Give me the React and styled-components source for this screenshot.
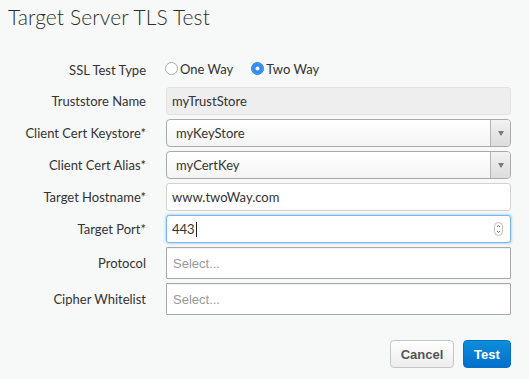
import React from "react";
import styled, { createGlobalStyle } from "styled-components";

const GlobalStyle = createGlobalStyle`
  body {
    margin: 0;
    background: #f7f8f8;
    font-family: Lato, "Open Sans", sans-serif;
    color: #333;
  }
`;

const Page = styled.div`
  width: 529px;
  height: 379px;
  box-sizing: border-box;
  padding: 5px 18px 0 8px;
`;

const Title = styled.h1`
  margin: 0 0 28px;
  font-size: 21px;
  line-height: 24px;
  font-weight: 300;
  color: #2e2e2e;
  letter-spacing: 0.1px;
`;

const Form = styled.div`
  display: grid;
  grid-template-columns: 138px 345px;
  column-gap: 20px;
  row-gap: 4px;
  align-items: center;
`;

const Label = styled.label`
  text-align: right;
  font-size: 13px;
  color: #333;
  white-space: nowrap;
`;

const RadioRow = styled.div`
  display: flex;
  align-items: center;
  height: 24px;
  margin-bottom: 2px;
  font-size: 13px;
`;

const RadioOption = styled.span`
  display: flex;
  align-items: center;
  margin-right: ${(p) => p.$gap || 0}px;
  margin-left: -1px;
`;

const RadioDot = styled.span`
  width: 13px;
  height: 13px;
  box-sizing: border-box;
  border-radius: 50%;
  margin-right: 2px;
  margin-top: -2px;
  ${(p) =>
    p.$checked
      ? `background: #2f8ef0; border: 1px solid #2a82de; box-shadow: inset 0 0 0 3.5px #2f8ef0, inset 0 0 0 7px #fff;`
      : `background: #fff; border: 1px solid #a8a8a8;`}
`;

const TextBox = styled.div`
  height: 28px;
  box-sizing: border-box;
  display: flex;
  align-items: center;
  padding: 0 6px 0 5px;
  font-size: 13px;
  border-radius: 3px;
  background: ${(p) => (p.$disabled ? "#eeeeee" : "#fff")};
  border: 1px solid ${(p) => (p.$disabled ? "#e2e2e2" : p.$focus ? "#76b6f4" : "#d2d2d2")};
  box-shadow: ${(p) => (p.$focus ? "0 0 2px 1px rgba(118,182,244,0.45)" : "none")};
`;

const Caret = styled.span`
  width: 1px;
  height: 15px;
  background: #222;
  margin-left: 1px;
`;

const Spinner = styled.svg`
  margin-left: auto;
  margin-right: 1px;
`;

const SelectBox = styled.div`
  height: 28px;
  box-sizing: border-box;
  display: flex;
  border: 1px solid #a9a9a9;
  border-radius: 4px;
  background: linear-gradient(#ffffff, #f4f4f4);
  font-size: 13px;
  overflow: hidden;
`;

const SelectValue = styled.span`
  flex: 1;
  display: flex;
  align-items: center;
  padding-left: 9px;
`;

const ArrowBox = styled.span`
  width: 19px;
  border-left: 1px solid #b5b5b5;
  background: linear-gradient(#f2f2f2, #dcdcdc);
  display: flex;
  align-items: center;
  justify-content: center;
`;

const Arrow = styled.span`
  width: 0;
  height: 0;
  border-left: 3px solid transparent;
  border-right: 3px solid transparent;
  border-top: 5px solid #7a7a7a;
  margin-top: 1px;
`;

const MultiSelect = styled.div`
  height: 32px;
  box-sizing: border-box;
  display: flex;
  align-items: center;
  padding: 0 6px;
  background: #fff;
  border: 1px solid #a8a8a8;
  border-radius: 1px;
  box-shadow: inset 0 1px 1px rgba(0, 0, 0, 0.06);
  font-family: "Liberation Sans", Arial, sans-serif;
  font-size: 13px;
  color: #999;
`;

const Actions = styled.div`
  display: flex;
  justify-content: flex-end;
  gap: 9px;
  margin-top: 25px;
`;

const Button = styled.button`
  height: 28px;
  box-sizing: border-box;
  padding: 0;
  width: ${(p) => p.$w}px;
  border-radius: 4px;
  font-family: "Liberation Sans", Arial, sans-serif;
  font-weight: 700;
  font-size: 13px;
  cursor: pointer;
  ${(p) =>
    p.$primary
      ? `color: #fff; border: 1px solid #0a6fc2; background: linear-gradient(#0e8edb, #006fcc);`
      : `color: #555; border: 1px solid #c6c6c6; background: linear-gradient(#ffffff, #ededed);`}
`;

const PortSpinner = () => (
  <Spinner width="9" height="14" viewBox="0 0 9 14">
    <rect x="0.5" y="0.5" width="8" height="13" rx="4" fill="#fff" stroke="#bdbdbd" />
    <path d="M3 5 L4.5 3.5 L6 5" fill="none" stroke="#555" strokeWidth="0.9" />
    <path d="M3 9 L4.5 10.5 L6 9" fill="none" stroke="#555" strokeWidth="0.9" />
  </Spinner>
);

export default function App() {
  return (
    <Page>
      <GlobalStyle />
      <Title>Target Server TLS Test</Title>
      <Form>
        <Label>SSL Test Type</Label>
        <RadioRow>
          <RadioOption $gap={19}>
            <RadioDot />
            One Way
          </RadioOption>
          <RadioOption>
            <RadioDot $checked />
            Two Way
          </RadioOption>
        </RadioRow>

        <Label>Truststore Name</Label>
        <TextBox $disabled>myTrustStore</TextBox>

        <Label>Client Cert Keystore*</Label>
        <SelectBox>
          <SelectValue>myKeyStore</SelectValue>
          <ArrowBox><Arrow /></ArrowBox>
        </SelectBox>

        <Label>Client Cert Alias*</Label>
        <SelectBox>
          <SelectValue>myCertKey</SelectValue>
          <ArrowBox><Arrow /></ArrowBox>
        </SelectBox>

        <Label>Target Hostname*</Label>
        <TextBox>www.twoWay.com</TextBox>

        <Label>Target Port*</Label>
        <TextBox $focus>
          443<Caret />
          <PortSpinner />
        </TextBox>

        <Label>Protocol</Label>
        <MultiSelect>Select...</MultiSelect>

        <Label>Cipher Whitelist</Label>
        <MultiSelect>Select...</MultiSelect>
      </Form>
      <Actions>
        <Button $w={64}>Cancel</Button>
        <Button $w={48} $primary>Test</Button>
      </Actions>
    </Page>
  );
}
